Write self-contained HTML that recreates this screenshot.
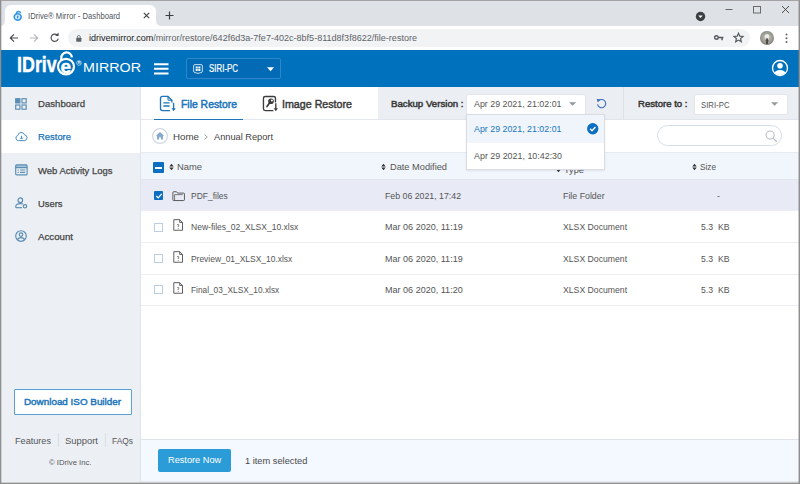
<!DOCTYPE html>
<html><head><meta charset="utf-8"><title>IDrive Mirror</title>
<style>
*{box-sizing:border-box;margin:0;padding:0}
html,body{width:800px;height:484px;overflow:hidden;background:#fff}
body{font-family:"Liberation Sans",sans-serif;position:relative;color:#333}
.abs{position:absolute}
.fr{position:absolute;z-index:50}
#tabbar{left:0;top:0;width:800px;height:26px;background:#dee1e6}
#tab{left:5px;top:5px;width:151px;height:21px;background:#fff;border-radius:6px 6px 0 0}
#toolbar{left:0;top:26px;width:800px;height:24px;background:#fff}
#urlpill{left:68px;top:29px;width:682px;height:18px;border-radius:9px;background:#f1f3f4}
#hdr{left:0;top:50px;width:800px;height:37px;background:#0071bc}
#side{left:0;top:87px;width:140px;height:395px;background:#ecf0f5}
#sideline{left:140px;top:87px;width:1px;height:395px;background:#dfe4ea}
.navbg{left:0;width:140px;height:33px}
#tabsrow{left:141px;top:87px;width:659px;height:33px;background:#fff;border-bottom:1px solid #e4e8ee}
#verbar{left:378px;top:87px;width:422px;height:33px;background:#ebeff4;border-bottom:1px solid #e1e5eb}
#crumb{left:141px;top:120px;width:659px;height:32px;background:#fff}
#thead{left:141px;top:152px;width:659px;height:28px;background:#f1f5fc;border-top:1px solid #e6eaf1;border-bottom:1px solid #e2e6ee}
.row{left:141px;width:659px;border-bottom:1px solid #eceef2;background:#fff}
.row.sel{background:#e8ebf6}
.t{position:absolute;font-size:9.5px;line-height:12px;white-space:pre;color:#555;transform-origin:0 50%}
.sb{-webkit-text-stroke:0.25px currentColor}
.ic{position:absolute;overflow:visible}
.sel-box{position:absolute;background:#fff;border:1px solid #e2e6ec;border-radius:2px}
#popup{left:466px;top:114px;width:139px;height:56px;background:#fff;border:1px solid #d9dde3;box-shadow:0 1px 2px rgba(0,0,0,.07);z-index:10}
#popup .i1{position:absolute;left:0;top:0;width:137px;height:28px;background:#f0f5fb}
.cb{position:absolute;width:9px;height:9px;border:1px solid #bacee5;background:#fff}
.cbon{position:absolute;background:#0a6fc0;border-radius:1px}
</style></head><body>
<div class="abs" id="tabbar"></div><div class="abs" id="tab"></div>
<svg class="ic" style="left:0;top:20px" width="162" height="6" viewBox="0 0 162 6"><path d="M0 6 H5 V0 Q5 6 0 6 Z M156 0 V6 H162 Q156 6 156 0 Z" fill="#fff"/></svg>
<svg class="ic" style="left:13.3px;top:10.4px" width="10" height="11" viewBox="0 0 10 11"><g transform="rotate(8 5 6)"><path d="M3.1 4.6 V3.4 A2.1 2.1 0 0 1 7.2 2.9" fill="none" stroke="#3395df" stroke-width="1.6"/><ellipse cx="4.8" cy="7" rx="3.5" ry="3.2" fill="#d6eafa" stroke="#3395df" stroke-width="1.6"/><rect x="4.1" y="5.6" width="1.4" height="2.8" fill="#3395df"/></g></svg>
<div class="t " style="transform:scaleX(0.8234);left:28px;top:10.00px;font-size:9.3px;color:#50565c;">IDrive® Mirror - Dashboard</div>

<svg class="ic" style="left:142.5px;top:12.3px" width="7" height="7" viewBox="0 0 7 7"><path d="M0.8 0.8 L6.2 6.2 M6.2 0.8 L0.8 6.2" stroke="#3c4043" stroke-width="1.1"/></svg>
<svg class="ic" style="left:165px;top:11px" width="9" height="9" viewBox="0 0 9 9"><path d="M4.5 0.5 V8.5 M0.5 4.5 H8.5" stroke="#3c4043" stroke-width="1.2"/></svg>
<svg class="ic" style="left:695px;top:11px" width="11" height="11" viewBox="0 0 11 11"><circle cx="5.5" cy="5.5" r="4.7" fill="#3c4043"/><path d="M3.3 4.5 H7.7 L5.5 7 Z" fill="#fff"/></svg>
<svg class="ic" style="left:725px;top:5px" width="70" height="10" viewBox="0 0 70 10"><path d="M0.5 4.5 H7.5" stroke="#666" stroke-width="1"/><rect x="28.5" y="1.5" width="7" height="6.5" fill="none" stroke="#6a6a6a" stroke-width="1"/><path d="M57 1 L64 8 M64 1 L57 8" stroke="#4a4a4a" stroke-width="1"/></svg>
<div class="abs" id="toolbar"></div>
<svg class="ic" style="left:9px;top:32px" width="56" height="12" viewBox="0 0 56 12"><path d="M9 6 H1.5 M5 2.3 L1.3 6 L5 9.7" fill="none" stroke="#4a4d51" stroke-width="1.2"/><path d="M21 6 H28.5 M25 2.3 L28.7 6 L25 9.7" fill="none" stroke="#b4b7bb" stroke-width="1.2"/><path d="M48.2 3.2 A3.6 3.6 0 1 0 49.2 6.6" fill="none" stroke="#4a4d51" stroke-width="1.2"/><path d="M46.2 3.9 H49.6 V0.6 Z" fill="#4a4d51"/></svg>
<div class="abs" id="urlpill"></div>
<svg class="ic" style="left:76.3px;top:34.5px" width="5.6" height="7.2" viewBox="0 0 7 9"><rect x="0.3" y="3.5" width="6.4" height="5" rx="0.6" fill="#5f6368"/><path d="M1.7 3.6 V2.4 A1.8 1.8 0 0 1 5.3 2.4 V3.6" fill="none" stroke="#5f6368" stroke-width="1"/></svg>
<div class="t " style="transform:scaleX(0.9333);left:89px;top:32.00px;font-size:9.7px;color:#5f6368;"><span style="color:#202124">idrivemirror.com</span>/mirror/restore/642f6d3a-7fe7-402c-8bf5-811d8f3f8622/file-restore</div>

<svg class="ic" style="left:714px;top:34px" width="10" height="8" viewBox="0 0 10 8"><circle cx="2.4" cy="3.5" r="1.8" fill="none" stroke="#55595e" stroke-width="1.4"/><path d="M4.2 3.5 H9.4 M8 3.5 V6.2" stroke="#55595e" stroke-width="1.5" fill="none"/></svg>
<svg class="ic" style="left:733px;top:32px" width="11" height="11" viewBox="0 0 11 11"><path d="M5.5 1.2 L6.8 4.2 L10 4.5 L7.6 6.6 L8.3 9.8 L5.5 8.1 L2.7 9.8 L3.4 6.6 L1 4.5 L4.2 4.2 Z" fill="none" stroke="#55595e" stroke-width="1.2"/></svg>
<svg class="ic" style="left:760px;top:31px" width="14" height="14" viewBox="0 0 14 14"><defs><clipPath id="av"><circle cx="7" cy="7" r="7"/></clipPath><radialGradient id="ag" cx="50%" cy="45%" r="60%"><stop offset="0" stop-color="#c9c6bf"/><stop offset="0.6" stop-color="#a3a099"/><stop offset="1" stop-color="#75736d"/></radialGradient></defs><g clip-path="url(#av)"><rect width="14" height="14" fill="url(#ag)"/><rect x="0" y="0" width="14" height="3.5" fill="#8f9a8c" opacity="0.7"/><ellipse cx="7" cy="5.6" rx="2.3" ry="2.6" fill="#ecebe7"/><rect x="6.3" y="7.4" width="1.5" height="5.6" fill="#34322f"/><rect x="5.6" y="9" width="2.9" height="1.3" fill="#4a4844"/></g></svg>
<svg class="ic" style="left:785px;top:33px" width="3" height="11" viewBox="0 0 3 11"><circle cx="1.5" cy="1.5" r="1" fill="#5f6368"/><circle cx="1.5" cy="5.3" r="1" fill="#5f6368"/><circle cx="1.5" cy="9.1" r="1" fill="#5f6368"/></svg>
<div class="abs" id="hdr"></div>
<div class="t" style="transform:scaleX(0.8448);left:16.8px;top:53.2px;font-size:21.2px;font-weight:bold;color:#fff;line-height:24px;-webkit-text-stroke:0.4px #fff">IDriv</div>
<svg class="ic" style="left:55px;top:50px" width="24" height="28" viewBox="0 0 24 28"><path d="M6.3 11 V8.1 A5.2 5.2 0 0 1 16.9 7.4" fill="none" stroke="#fff" stroke-width="2.3"/><ellipse cx="11" cy="16.6" rx="8" ry="7.8" fill="none" stroke="#fff" stroke-width="2.2"/><text x="5.4" y="22.6" font-family="Liberation Sans" font-weight="bold" font-size="19" fill="#fff" stroke="#fff" stroke-width="0.4">e</text></svg>
<svg class="ic" style="left:75.5px;top:59.5px" width="6" height="6" viewBox="0 0 6 6"><circle cx="3" cy="3" r="2.3" fill="none" stroke="#cfe3f4" stroke-width="0.7"/><text x="1.7" y="4.4" font-family="Liberation Sans" font-size="3.8" font-weight="bold" fill="#e6f0fa">R</text></svg>
<div class="t" style="transform:scaleX(1.0519);left:82.8px;top:59.8px;font-size:13.6px;color:#fff;line-height:16px">MIRROR</div>
<svg class="ic" style="left:153.5px;top:62.7px" width="14.5" height="13" viewBox="0 0 14.5 13"><path d="M0 1.2 H14.5 M0 5.8 H14.5 M0 10.4 H14.5" stroke="#fff" stroke-width="2"/></svg>
<div class="abs" style="left:186px;top:58px;width:95px;height:21px;border:1px solid #2d88cb;border-radius:2px;background:#036bb5"></div>
<svg class="ic" style="left:192.5px;top:63.5px" width="10" height="10" viewBox="0 0 10 10"><path d="M0.6 2 Q0.6 0.6 2 0.6 H8 Q9.4 0.6 9.4 2 V7 Q9.4 8.4 8 8.6 L5 9.4 L2 8.6 Q0.6 8.4 0.6 7 Z" fill="none" stroke="#d9e8f5" stroke-width="0.9"/><path d="M2.7 2.6 H4.7 V4.5 H2.7 Z M5.3 2.6 H7.4 V4.5 H5.3 Z M2.7 5.1 H4.7 V7 H2.7 Z M5.3 5.1 H7.4 V7 H5.3 Z" fill="#fff"/></svg>
<div class="t sb" style="transform:scaleX(0.7908);left:209px;top:62.60px;font-size:10px;color:#fff;-webkit-text-stroke-width:0.2px;">SIRI-PC</div>

<svg class="ic" style="left:267px;top:67px" width="7" height="5" viewBox="0 0 7 5"><path d="M0 0.3 H7 L3.5 4.3 Z" fill="#fff"/></svg>
<svg class="ic" style="left:771px;top:59px" width="18" height="18" viewBox="0 0 18 18"><defs><clipPath id="uc"><circle cx="9" cy="9" r="7"/></clipPath></defs><circle cx="9" cy="9" r="7.5" fill="none" stroke="#fff" stroke-width="1.3"/><circle cx="9" cy="6.8" r="2.8" fill="#fff"/><ellipse cx="9" cy="15.2" rx="6" ry="4.3" fill="#fff" clip-path="url(#uc)"/></svg>
<div class="abs" id="side"></div><div class="abs" id="sideline"></div>
<div class="abs navbg" style="top:120px;height:32.6px;background:#fff"></div>
<div class="t sb" style="transform:scaleX(1.0013);left:38px;top:97.50px;font-size:9.6px;color:#444;">Dashboard</div>

<div class="t sb" style="transform:scaleX(0.9823);left:38px;top:131.00px;font-size:9.6px;color:#1b75bc;">Restore</div>

<div class="t sb" style="transform:scaleX(0.9861);left:38px;top:164.50px;font-size:9.6px;color:#444;">Web Activity Logs</div>

<div class="t sb" style="transform:scaleX(0.9776);left:38px;top:197.50px;font-size:9.6px;color:#444;">Users</div>

<div class="t sb" style="transform:scaleX(1.0095);left:38px;top:230.80px;font-size:9.6px;color:#444;">Account</div>

<svg class="ic" style="left:15px;top:98px" width="12" height="12" viewBox="0 0 12 12"><g fill="none" stroke="#5a8db3" stroke-width="1.15"><rect x="0.7" y="0.7" width="4.2" height="4.2" fill="#5a8db3"/><rect x="7" y="0.7" width="4.2" height="4.2"/><rect x="0.7" y="7" width="4.2" height="4.2"/><rect x="7" y="7" width="4.2" height="4.2"/></g></svg>
<svg class="ic" style="left:15px;top:131px" width="13" height="11" viewBox="0 0 13 11"><path d="M3.4 9.6 A2.6 2.6 0 0 1 2.8 4.5 A3.5 3.5 0 0 1 9.6 3.9 A2.9 2.9 0 0 1 9.8 9.6 Z" fill="none" stroke="#4b8dbe" stroke-width="1"/><path d="M6.5 4.8 V8 M5.1 6.7 L6.5 8.1 L7.9 6.7" fill="none" stroke="#4b8dbe" stroke-width="1"/></svg>
<svg class="ic" style="left:15px;top:164px" width="13" height="12" viewBox="0 0 13 12"><rect x="0.7" y="0.9" width="11.4" height="2.7" fill="#5a8db3" opacity="0.45"/><rect x="0.7" y="0.9" width="11.4" height="10" rx="1" fill="none" stroke="#5a8db3" stroke-width="1.15"/><path d="M0.7 3.6 H12 M2.6 6 H3.8 M5 6 H10.2 M2.6 8.3 H3.8 M5 8.3 H10.2" stroke="#5a8db3" stroke-width="1.15"/></svg>
<svg class="ic" style="left:15px;top:197px" width="13" height="12" viewBox="0 0 13 12"><circle cx="5.3" cy="3.2" r="2.3" fill="none" stroke="#5a8db3" stroke-width="1.15"/><path d="M0.8 10.8 V9.6 Q0.8 6.6 5.3 6.6 Q7 6.6 8 7.1" fill="none" stroke="#5a8db3" stroke-width="1.15"/><path d="M0.8 10.7 H7" stroke="#5a8db3" stroke-width="1.15"/><circle cx="10" cy="9.3" r="1.7" fill="none" stroke="#5a8db3" stroke-width="1.15"/></svg>
<svg class="ic" style="left:15px;top:230px" width="12" height="12" viewBox="0 0 12 12"><circle cx="6" cy="6" r="5.3" fill="none" stroke="#5a8db3" stroke-width="1.15"/><circle cx="6" cy="4.6" r="1.8" fill="none" stroke="#5a8db3" stroke-width="1.15"/><path d="M2.5 9.8 Q3 7.6 6 7.6 Q9 7.6 9.5 9.8" fill="none" stroke="#5a8db3" stroke-width="1.15"/></svg>
<div class="abs" style="left:14px;top:389px;width:118px;height:26px;border:1px solid #5aa2d6;background:#fff;border-radius:1px"></div>
<div class="t sb" style="transform:scaleX(1.0063);left:24px;top:396.00px;font-size:9.8px;color:#1b75bc;-webkit-text-stroke-width:0.45px;">Download ISO Builder</div>

<div class="t " style="transform:scaleX(0.9600);left:15px;top:434.50px;font-size:9.5px;color:#555;">Features</div>

<div class="t " style="transform:scaleX(0.9915);left:65px;top:434.50px;font-size:9.5px;color:#555;">Support</div>

<div class="t " style="transform:scaleX(0.8836);left:112px;top:434.50px;font-size:9.5px;color:#555;">FAQs</div>

<div class="abs" style="left:58px;top:433px;width:1px;height:14px;background:#dadfe5"></div><div class="abs" style="left:105px;top:433px;width:1px;height:14px;background:#dadfe5"></div>
<div class="t " style="transform:scaleX(1.0145);left:49px;top:457.30px;font-size:7.6px;color:#555;">© IDrive Inc.</div>

<div class="abs" id="tabsrow"></div><div class="abs" id="verbar"></div>
<svg class="ic" style="left:159px;top:94.5px" width="17" height="18" viewBox="0 0 17 18"><path d="M11 15.6 H3.5 Q1.5 15.6 1.5 13.6 V3.4 Q1.5 1.4 3.5 1.4 H9 L12.9 5.3 V7.4" fill="none" stroke="#1f76b8" stroke-width="1.35"/><path d="M9 1.4 V4.2 Q9 5.3 10.1 5.3 H12.9" fill="none" stroke="#1f76b8" stroke-width="1.1"/><path d="M4.4 7.9 H10.6 M4.4 11 H10.6" stroke="#1f76b8" stroke-width="1.35"/><path d="M14.6 7.8 V14.5" stroke="#1f76b8" stroke-width="1.35"/><path d="M12.5 13.2 H16.7 L14.6 16.2 Z" fill="#1f76b8"/></svg>
<div class="t sb" style="transform:scaleX(0.9621);left:180.5px;top:98.00px;font-size:10.8px;color:#1b75bc;-webkit-text-stroke-width:0.5px;">File Restore</div>

<div class="abs" style="left:154px;top:118.6px;width:89px;height:1.5px;background:#1b75bc"></div>
<svg class="ic" style="left:261.5px;top:94.5px" width="17" height="18" viewBox="0 0 17 18"><rect x="1.45" y="1.45" width="12" height="14.1" rx="1.8" fill="none" stroke="#3c3c3c" stroke-width="1.35"/><rect x="11.4" y="7.4" width="5.6" height="10.6" fill="#fff"/><circle cx="9" cy="6.2" r="2.8" fill="#3c3c3c"/><circle cx="9.9" cy="5.5" r="1" fill="#fff"/><path d="M7.8 7.6 L5 11.6" stroke="#3c3c3c" stroke-width="1.7" stroke-linecap="round"/><path d="M13.8 8.2 V14.5" stroke="#3c3c3c" stroke-width="1.35"/><path d="M11.7 13.2 H15.9 L13.8 16.2 Z" fill="#3c3c3c"/></svg>
<div class="t sb" style="transform:scaleX(0.9885);left:282px;top:98.00px;font-size:10.8px;color:#3b3b3b;-webkit-text-stroke-width:0.45px;">Image Restore</div>

<div class="t sb" style="transform:scaleX(1.0169);left:391px;top:98.00px;font-size:9.5px;color:#3a3a3a;-webkit-text-stroke-width:0.5px;">Backup Version :</div>

<div class="sel-box" style="left:466px;top:94px;width:120px;height:21px"></div>
<div class="t " style="transform:scaleX(0.9305);left:474px;top:98.30px;font-size:9.5px;color:#555;">Apr 29 2021, 21:02:01</div>

<svg class="ic" style="left:568.5px;top:102.3px" width="7.2" height="4" viewBox="0 0 7.2 4"><path d="M0 0.2 H7.2 L3.6 3.8 Z" fill="#94999e"/></svg>
<svg class="ic" style="left:596.2px;top:98px" width="11.2" height="11.2" viewBox="0 0 12 12"><path d="M3.1 2.7 A4.4 4.4 0 1 1 1.7 6.8" fill="none" stroke="#3a6cc0" stroke-width="1.2"/><path d="M0.7 1.0 L4.6 1.4 L2.0 4.8 Z" fill="#3a6cc0"/></svg>
<div class="abs" style="left:623px;top:87px;width:1px;height:33px;background:#dde2e9"></div>
<div class="t sb" style="transform:scaleX(1.0080);left:637.5px;top:98.00px;font-size:9.5px;color:#3a3a3a;-webkit-text-stroke-width:0.5px;">Restore to :</div>

<div class="sel-box" style="left:694px;top:94px;width:94px;height:21px"></div>
<div class="t " style="transform:scaleX(0.8021);left:700.5px;top:98.80px;font-size:9.7px;color:#555;">SIRI-PC</div>

<svg class="ic" style="left:770.5px;top:102.3px" width="7.2" height="4" viewBox="0 0 7.2 4"><path d="M0 0.2 H7.2 L3.6 3.8 Z" fill="#94999e"/></svg>
<div class="abs" id="crumb"></div>
<svg class="ic" style="left:151.5px;top:127.8px" width="16" height="16" viewBox="0 0 16 16"><circle cx="8" cy="8" r="7.4" fill="#fff" stroke="#d0d8e2" stroke-width="1.2"/><path d="M8 4 L3.8 7.8 H5 V11.4 H7.1 V9.2 H8.9 V11.4 H11 V7.8 H12.2 Z" fill="#86a8cc"/></svg>
<div class="t " style="transform:scaleX(1.0159);left:173px;top:130.50px;font-size:9.6px;color:#444;">Home</div>

<svg class="ic" style="left:204px;top:133.5px" width="4" height="6" viewBox="0 0 4 6"><path d="M0.6 0.5 L3.2 3 L0.6 5.5" fill="none" stroke="#8a8f96" stroke-width="0.9"/></svg>
<div class="t " style="transform:scaleX(0.9618);left:214px;top:130.50px;font-size:9.6px;color:#444;">Annual Report</div>

<div class="abs" style="left:657px;top:125px;width:125px;height:21px;border:1px solid #d5dee8;border-radius:11px;background:#fff"></div>
<svg class="ic" style="left:764.8px;top:129.8px" width="12.8" height="12.8" viewBox="0 0 12 12"><circle cx="4.8" cy="4.8" r="3.8" fill="none" stroke="#b4bcc6" stroke-width="1"/><path d="M7.6 7.6 L11 11" stroke="#b4bcc6" stroke-width="1.1"/></svg>
<div class="abs" id="thead"></div>
<div class="cbon" style="left:153px;top:162px;width:11px;height:11px"></div><div class="abs" style="left:155px;top:166.5px;width:7px;height:2px;background:#fff"></div>
<svg class="ic" style="left:169px;top:162.6px" width="5" height="8" viewBox="0 0 5 8"><path d="M2.5 0.8 L4.7 3.4 H0.3 Z M2.5 7.2 L4.7 4.6 H0.3 Z" fill="#333"/></svg>
<svg class="ic" style="left:381px;top:162.6px" width="5" height="8" viewBox="0 0 5 8"><path d="M2.5 0.8 L4.7 3.4 H0.3 Z M2.5 7.2 L4.7 4.6 H0.3 Z" fill="#333"/></svg>
<svg class="ic" style="left:556px;top:165.2px" width="5" height="8" viewBox="0 0 5 8"><path d="M2.5 0.8 L4.7 3.4 H0.3 Z M2.5 7.2 L4.7 4.6 H0.3 Z" fill="#333"/></svg>
<svg class="ic" style="left:692px;top:162.6px" width="5" height="8" viewBox="0 0 5 8"><path d="M2.5 0.8 L4.7 3.4 H0.3 Z M2.5 7.2 L4.7 4.6 H0.3 Z" fill="#333"/></svg>
<div class="t " style="transform:scaleX(0.9864);left:177px;top:160.80px;font-size:9.5px;">Name</div>

<div class="t " style="transform:scaleX(0.9723);left:389.5px;top:160.80px;font-size:9.5px;">Date Modified</div>

<div class="t " style="transform:scaleX(0.9704);left:563.5px;top:163.60px;font-size:9.5px;">Type</div>

<div class="t " style="transform:scaleX(0.8656);left:700px;top:160.80px;font-size:9.5px;">Size</div>

<div class="abs row sel" style="top:180px;height:31.19999999999999px"></div>
<div class="cbon" style="left:154px;top:191.1px;width:9px;height:9px"></div><svg class="ic" style="left:154.5px;top:191.6px" width="8" height="8" viewBox="0 0 8 8"><path d="M1.3 4 L3.2 5.9 L6.7 1.9" fill="none" stroke="#fff" stroke-width="1.3"/></svg>
<svg class="ic" style="left:172px;top:190.6px" width="13.6" height="10.5" viewBox="0 0 14 11"><path d="M0.8 9.2 V1.6 Q0.8 0.8 1.6 0.8 H4.6 L5.8 2.2 H12 Q12.9 2.2 12.9 3 V9.2 Q12.9 10 12 10 H1.6 Q0.8 10 0.8 9.2 Z" fill="none" stroke="#555" stroke-width="1"/><path d="M2.6 9.8 V3.8 H11" fill="none" stroke="#555" stroke-width="0.8"/></svg>
<div class="t " style="transform:scaleX(0.8935);left:190.8px;top:189.60px;font-size:9.5px;">PDF_files</div>

<div class="t " style="transform:scaleX(0.9223);left:385.2px;top:189.60px;font-size:9.5px;">Feb 06 2021, 17:42</div>

<div class="t " style="transform:scaleX(0.9270);left:563.4px;top:189.60px;font-size:9.5px;">File Folder</div>

<div class="t " style="transform:scaleX(0.9458);left:717px;top:189.60px;font-size:9.5px;">-</div>

<div class="abs row" style="top:211.2px;height:31.80000000000001px"></div>
<div class="cb" style="left:154px;top:222.5px"></div>
<svg class="ic" style="left:173px;top:219.4px" width="10.6" height="12.2" viewBox="0 0 11 13"><path d="M0.7 0.7 H7 L10 3.7 V12 H0.7 Z M7 0.7 V3.7 H10" fill="none" stroke="#555" stroke-width="1"/><path d="M4.4 6 Q5.4 5.3 6 6.2 Q6.2 7 5.4 7.6 V8.6 M5.4 9.6 V10.4" fill="none" stroke="#555" stroke-width="0.9"/></svg>
<div class="t " style="transform:scaleX(0.8982);left:190.8px;top:221.00px;font-size:9.5px;">New-files_02_XLSX_10.xlsx</div>

<div class="t " style="transform:scaleX(0.9512);left:385.2px;top:221.00px;font-size:9.5px;">Mar 06 2020, 11:19</div>

<div class="t " style="transform:scaleX(0.9127);left:563.4px;top:221.00px;font-size:9.5px;">XLSX Document</div>

<div class="t " style="transform:scaleX(0.9143);left:701px;top:221.00px;font-size:9.5px;">5.3  KB</div>

<div class="abs row" style="top:243px;height:31.600000000000023px"></div>
<div class="cb" style="left:154px;top:254.0px"></div>
<svg class="ic" style="left:173px;top:250.9px" width="10.6" height="12.2" viewBox="0 0 11 13"><path d="M0.7 0.7 H7 L10 3.7 V12 H0.7 Z M7 0.7 V3.7 H10" fill="none" stroke="#555" stroke-width="1"/><path d="M4.4 6 Q5.4 5.3 6 6.2 Q6.2 7 5.4 7.6 V8.6 M5.4 9.6 V10.4" fill="none" stroke="#555" stroke-width="0.9"/></svg>
<div class="t " style="transform:scaleX(0.8871);left:190.8px;top:252.50px;font-size:9.5px;">Preview_01_XLSX_10.xlsx</div>

<div class="t " style="transform:scaleX(0.9512);left:385.2px;top:252.50px;font-size:9.5px;">Mar 06 2020, 11:19</div>

<div class="t " style="transform:scaleX(0.9127);left:563.4px;top:252.50px;font-size:9.5px;">XLSX Document</div>

<div class="t " style="transform:scaleX(0.9143);left:701px;top:252.50px;font-size:9.5px;">5.3  KB</div>

<div class="abs row" style="top:274.6px;height:31.5px"></div>
<div class="cb" style="left:154px;top:285.3px"></div>
<svg class="ic" style="left:173px;top:282.2px" width="10.6" height="12.2" viewBox="0 0 11 13"><path d="M0.7 0.7 H7 L10 3.7 V12 H0.7 Z M7 0.7 V3.7 H10" fill="none" stroke="#555" stroke-width="1"/><path d="M4.4 6 Q5.4 5.3 6 6.2 Q6.2 7 5.4 7.6 V8.6 M5.4 9.6 V10.4" fill="none" stroke="#555" stroke-width="0.9"/></svg>
<div class="t " style="transform:scaleX(0.8743);left:190.8px;top:283.80px;font-size:9.5px;">Final_03_XLSX_10.xlsx</div>

<div class="t " style="transform:scaleX(0.9512);left:385.2px;top:283.80px;font-size:9.5px;">Mar 06 2020, 11:20</div>

<div class="t " style="transform:scaleX(0.9127);left:563.4px;top:283.80px;font-size:9.5px;">XLSX Document</div>

<div class="t " style="transform:scaleX(0.9143);left:701px;top:283.80px;font-size:9.5px;">5.3  KB</div>

<div class="abs" id="popup"><div class="i1"></div>
<div class="t " style="transform:scaleX(0.9305);left:7px;top:8.30px;font-size:9.5px;color:#1b75bc;">Apr 29 2021, 21:02:01</div>

<svg class="ic" style="left:120.3px;top:7.5px" width="11.5" height="11.5" viewBox="0 0 11 11"><circle cx="5.5" cy="5.5" r="5.4" fill="#0b6ec0"/><path d="M3 5.6 L4.8 7.4 L8.1 3.9" fill="none" stroke="#fff" stroke-width="1.3"/></svg>
<div class="t " style="transform:scaleX(0.9359);left:7px;top:34.70px;font-size:9.5px;color:#555;">Apr 29 2021, 10:42:30</div>

</div>
<div class="abs" style="left:141px;top:439px;width:659px;height:43px;background:#f4f8ff;border-top:1px solid #e0e4ea;border-bottom:1px solid #e3e7ee"></div>
<div class="abs" style="left:158px;top:449px;width:73px;height:23px;background:#2b9cd8;border-radius:2px"></div>
<div class="t " style="transform:scaleX(0.9594);left:168.3px;top:454.30px;font-size:9.6px;color:#fff;">Restore Now</div>

<div class="t " style="transform:scaleX(0.9654);left:245px;top:455.00px;font-size:9.6px;color:#4a4a4a;">1 item selected</div>

<div class="fr" style="left:0;top:482px;width:800px;height:1px;background:#fff"></div>
<div class="fr" style="left:0;top:0;width:800px;height:1px;background:#a3a3a3"></div>
<div class="fr" style="left:0;top:0;width:1px;height:484px;background:#8f8f8f"></div><div class="fr" style="left:1px;top:1px;width:1px;height:482px;background:rgba(130,130,130,.28)"></div>
<div class="fr" style="left:799px;top:0;width:1px;height:484px;background:#8f8f8f"></div><div class="fr" style="left:798px;top:1px;width:1px;height:482px;background:rgba(130,130,130,.4)"></div>
<div class="fr" style="left:0;top:483px;width:800px;height:1px;background:#8f8f8f"></div><div class="fr" style="left:1px;top:482px;width:798px;height:1px;background:rgba(130,130,130,.4)"></div>
</body></html>
